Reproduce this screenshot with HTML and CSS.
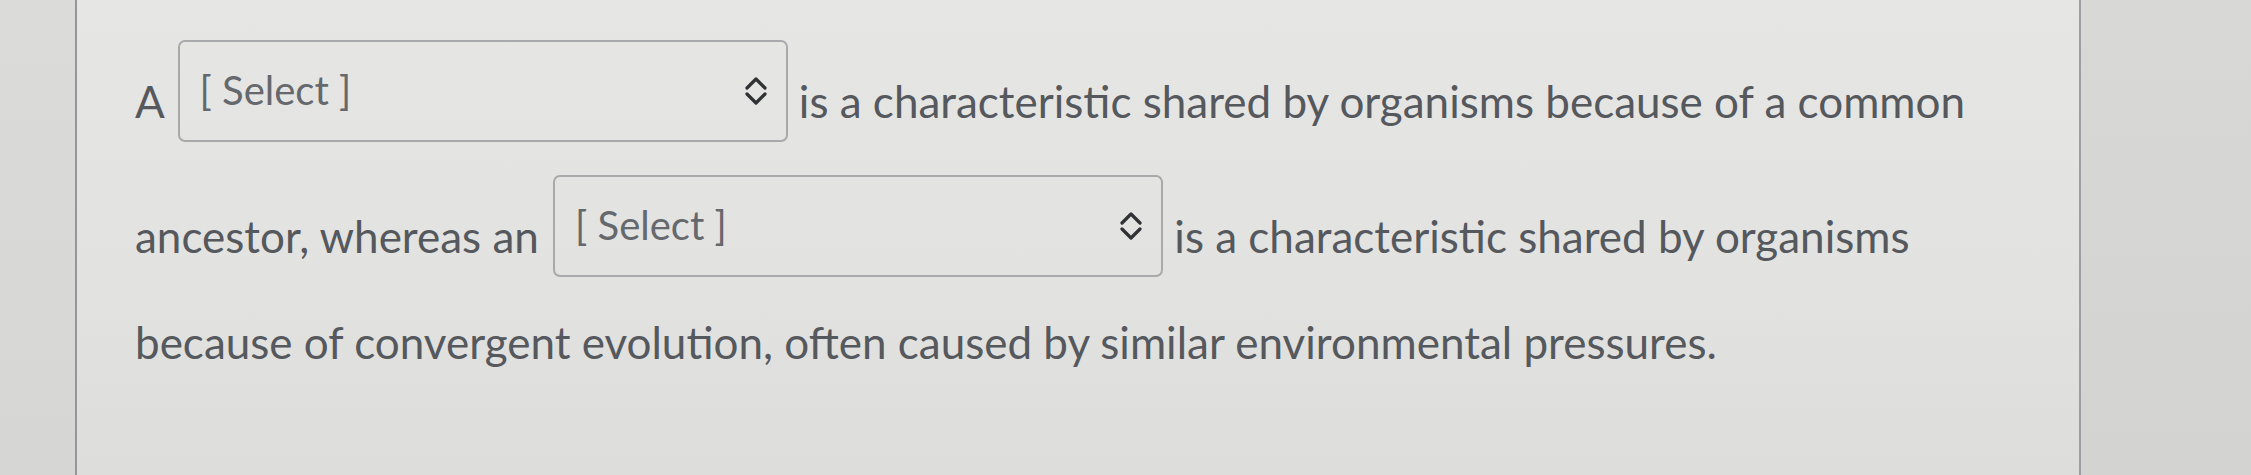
FILE: index.html
```html
<!DOCTYPE html>
<html lang="en">
<head>
<meta charset="utf-8">
<title>Question</title>
<link rel="stylesheet" href="styles.css">
</head>
<body>
<div class="page">
  <div class="gutter gutter-left"></div>
  <main class="panel">
    <p class="question">A <span class="select"><span class="select-text">[ Select ]</span><svg class="chev" width="24" height="28" viewBox="0 0 24 28"><path d="M3 11 L12 2 L21 11 M3 17 L12 26 L21 17" fill="none" stroke="#2f3134" stroke-width="3.2" stroke-linecap="round" stroke-linejoin="round"/></svg></span> is a characteristic shared by organisms because of a common ancestor, whereas an <span class="select"><span class="select-text">[ Select ]</span><svg class="chev" width="24" height="28" viewBox="0 0 24 28"><path d="M3 11 L12 2 L21 11 M3 17 L12 26 L21 17" fill="none" stroke="#2f3134" stroke-width="3.2" stroke-linecap="round" stroke-linejoin="round"/></svg></span> is a characteristic shared by organisms because of convergent evolution, often caused by similar environmental pressures.</p>
  </main>
  <div class="gutter gutter-right"></div>
</div>
</body>
</html>
```
FILE: styles.css
```css
html, body {
  margin: 0;
  padding: 0;
  height: 100%;
}
body {
  background: #dadad8;
  font-family: Lato, "Open Sans", sans-serif;
}
.page {
  display: flex;
  height: 475px;
  overflow: hidden;
}
.gutter-left {
  width: 75px;
  flex: none;
  background: linear-gradient(180deg, #dbdbda 0%, #d6d6d5 100%);
  border-right: 2px solid #93969c;
}
.panel {
  flex: 1;
  padding: 19px 0 0 58px;
  background: linear-gradient(180deg, #e6e6e4 0%, #e2e2e0 60%, #dddddb 100%);
  border-right: 2px solid #9c9ea3;
}
.gutter-right {
  width: 170px;
  flex: none;
  background: linear-gradient(180deg, #d8d8d7 0%, #d3d3d2 100%);
}
.question {
  margin: 0;
  width: 1880px;
  font-size: 44px;
  line-height: 106px;
  color: #55585d;
}
.select {
  display: inline-flex;
  align-items: flex-start;
  justify-content: space-between;
  box-sizing: border-box;
  width: 610px;
  height: 102px;
  margin-top: 21px;
  margin-left: 3px;
  padding: 0 18px 0 20px;
  border: 2px solid #a8a9ab;
  border-radius: 7px;
  vertical-align: 13px;
  line-height: 1.2;
}
.select-text {
  padding-top: 24px;
  font-size: 40px;
  color: #65686c;
}
.chev {
  align-self: center;
  flex: none;
}
```
